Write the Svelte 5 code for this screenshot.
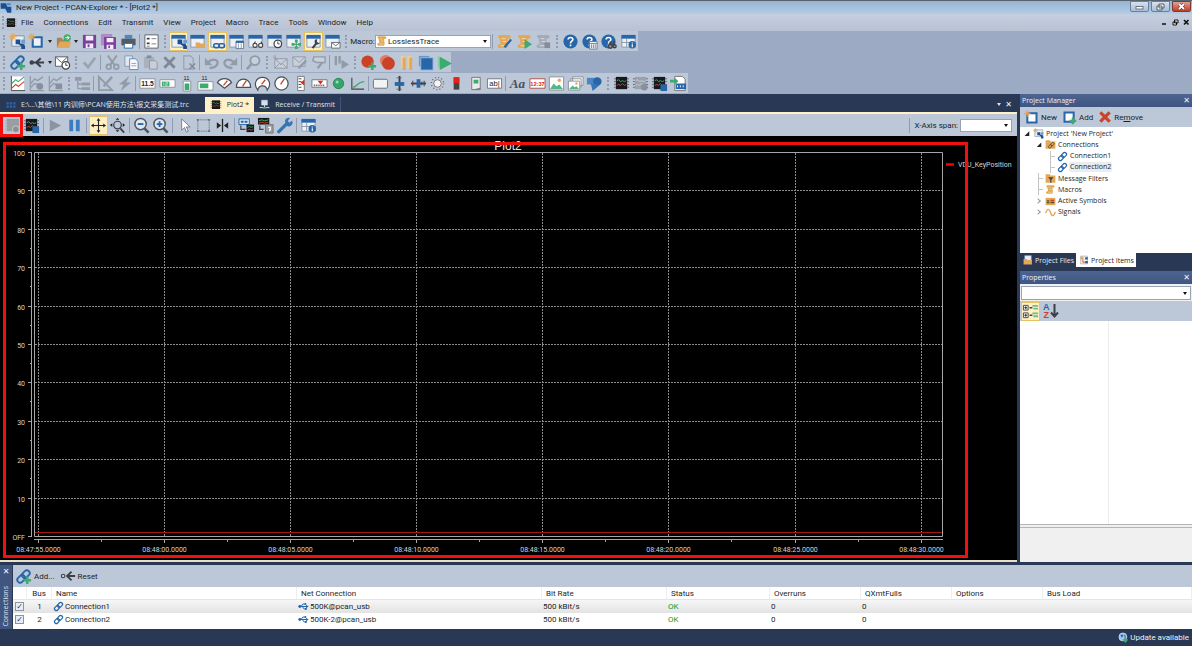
<script>
  const B = '#2766a8';
  const K = '#3c4147';
  const G = '#929ba8';
  const O = '#e3a857';
  const E = '#3dab70';
  const R = '#cb4327';

  const win = `<path d="M2 3h14v12H2z" fill="#eef1f5" stroke="#8b98aa"/><path d="M1.500 2h15v4h-15z" fill="${B}"/>`;
  const star = `<path d="M4 0v8M0 4h8M1.500 1.500l5 5M6.500 1.500l-5 5" stroke="${O}" stroke-width="1.200"/>`;
  const scroll = (c) => `<path d="M3 2h11l2 2-2 2h-2l1 7-1 3H3l-1.500-2L3 12h2L4 6 2 4z" fill="${c}"/><path d="M6 6h4M7 9h4M5 13.500h6" stroke="#fff" stroke-opacity=".6"/>`;
  const link = (c) => `<g transform="rotate(-45 9 9)" fill="none" stroke="${c}" stroke-width="2"><rect x="1" y="6" width="9" height="6" rx="3"/><rect x="8" y="6" width="9" height="6" rx="3"/></g>`;
  const plus = `<path d="M13 9v8M9 13h8" stroke="${E}" stroke-width="2.600"/>`;
  const net = (x, y) => `<g transform="translate(${x} ${y})"><path d="M0 0h5v4h3l2 3v3H6V7L3 5H0z" fill="#1d4f8e"/><path d="M6 0h4v4H6z" fill="#6e9ccb"/></g>`;
  const scope = (c = '#16191c', a = '#3fae6d', b = '#d2453b') => `<path d="M3 2h12v13H3z" fill="${c}"/><path d="M1 4h2M1 7h2M1 10h2M1 13h2M15 4h2M15 7h2M15 10h2M15 13h2" stroke="#667"/><path d="M4 6l2-1 2 2 2-1 2 1 2-1" fill="none" stroke="${a}"/><path d="M4 11l2-1 2 1 2-2 2 2 2-1" fill="none" stroke="${b}"/>`;
  const dial = (p, n) => `<path d="${p}" fill="#fff" stroke="#4b5157" stroke-width="1.300"/><path d="${n}" stroke="${R}" stroke-width="1.400"/>`;
  const help = `<circle cx="9" cy="9" r="7.500" fill="${B}"/><path d="M6.500 7c0-3 5-3 5 0 0 1.800-2.500 1.700-2.500 4M9 12.300v1.700" fill="none" stroke="#fff" stroke-width="1.700"/>`;
  const lens = `<path d="M11 11l5.500 5.500" stroke="#4f565e" stroke-width="2.800"/><circle cx="8" cy="7.500" r="6" fill="#dfe7f1" stroke="#4f565e" stroke-width="1.600"/>`;
  const info = win + `<path d="M2 10h14M7 6v9" stroke="#8b98aa"/><circle cx="13" cy="12.500" r="4" fill="${B}"/><path d="M13 10v1M13 12v3" stroke="#fff" stroke-width="1.200"/>`;
  const disk = `<path d="M2 2h14v14H2z" fill="#7b3f9d"/><path d="M5 3h8v5H5zM5 11h8v5H5z" fill="#f3edf7"/><path d="M7 12h2v3H7z" fill="#7b3f9d"/>`;

  const icons = {
    app: `<path d="M1 2h8l2 5h6v9h-6L8 10H1z" fill="#1d4f8e"/><path d="M10 2h6v3h-5z" fill="#4d86c0"/>`,
    newproj: `<path d="M3 3h13v11H3z" fill="#e8eef6" stroke="#7c90a8"/>` + star + net(7, 7),
    newdoc: `<path d="M5 4.500h9.500v10H5z" fill="#eef3f8" stroke="${B}" stroke-width="2.200"/>` + star,
    open: `<path d="M2 5h5l1 2h7v8H2z" fill="#a7854e"/><path d="M5 9h12l-2 7H2z" fill="${O}"/><circle cx="13" cy="5" r="3.800" fill="${E}"/><path d="M11 5h4M13 3l2 2-2 2" fill="none" stroke="#fff"/>`,
    save: disk,
    saveall: `<path d="M1 1h12v12H1z" fill="#b08cc6"/><g transform="translate(2.500 2.500) scale(.9)">${disk}</g>`,
    print: `<path d="M5 2h8v4H5z" fill="#4d86c0"/><path d="M1.500 6h15v7h-15z" fill="#555b62"/><path d="M4.500 11h9v5h-9z" fill="#fff" stroke="${B}"/>`,
    list: `<path d="M2 2h14v14H2z" fill="#fff" stroke="#5d6268"/><path d="M4 5h3v2H4zM4 10h3v2H4z" fill="${K}"/><path d="M9 6h5M4 14h3M9 11.500h5" stroke="#777d83"/>`,
    wnet: win + net(8, 7),
    wfolder: win + `<path d="M7 10h4l1 1h5v5H7z" fill="${O}"/>`,
    wlink: win + `<g fill="none" stroke="${B}" stroke-width="1.600"><rect x="5" y="11.500" width="6" height="4" rx="2"/><rect x="10.500" y="11.500" width="6" height="4" rx="2"/></g>`,
    wtable: win + `<path d="M8.500 8.500h8v8h-8z" fill="#fff" stroke="#6b7b90"/><path d="M8.500 8.500h8v2h-8z" fill="${B}"/><path d="M11 11v5M14 11v5" stroke="#8a98ab"/>`,
    wglass: win + `<g fill="#eef1f5" stroke="${K}" stroke-width="1.100"><path d="M7 12l2-3M16 12l-1-3" /><circle cx="8.500" cy="13" r="2.200"/><circle cx="14.500" cy="13" r="2.200"/></g>`,
    wclock: win + `<circle cx="12.500" cy="11.500" r="4" fill="#fff" stroke="${K}" stroke-width="1.300"/><path d="M12.500 9v2.500h2" fill="none" stroke="${K}"/>`,
    wcross: win + `<path d="M12 8v8M8 12h8" stroke="${E}" stroke-width="1.200"/><path d="M10.500 7h3v3h-3zM10.500 14h3v3h-3zM7 10.500h3v3H7zM14 10.500h3v3h-3z" fill="${E}"/>`,
    wwrench: win + `<path d="M8 16l4-5" stroke="${K}" stroke-width="2.200"/><path d="M11 7a3 3 0 105 3l-2 .5-1.500-1.500.5-2.500z" fill="${K}"/>`,
    wmail: win + `<path d="M8 10h9v6H8z" fill="#fff" stroke="#666c73"/><path d="M8 10l4.500 3.500L17 10" fill="none" stroke="#666c73"/>`,
    macro: scroll(O),
    macroedit: scroll(O) + `<path d="M9 15l7-8" stroke="${B}" stroke-width="2.400"/>`,
    macrorun: scroll(O) + `<path d="M9 7l8 5-8 5z" fill="${E}"/>`,
    macrostop: scroll('#a4abb6') + `<path d="M10 10h6v6h-6z" fill="#858d99"/>`,
    help,
    helptable: help + `<path d="M9 9h8v8H9z" fill="#fff" stroke="#6b7b90"/><path d="M11 12v4M13 12v4M15 12v4M9 11h8" stroke="#6b7b90"/>`,
    helpglass: help + `<g fill="#999" stroke="${K}" stroke-width="1.400"><circle cx="11" cy="14" r="2"/><circle cx="15.500" cy="14" r="1.600"/></g><path d="M11 9v4M15 9v4" stroke="${K}" stroke-width="1.800"/>`,
    info,
    link: link(B),
    linkadd: link(B) + plus,
    reset: `<circle cx="4" cy="9" r="2.400" fill="${K}"/><path d="M6 9h11M8.500 9l5-4.500M8.500 9l5 4.500" fill="none" stroke="${K}" stroke-width="2.200"/>`,
    resetopen: `<circle cx="3.500" cy="9" r="2" fill="none" stroke="${K}" stroke-width="1.200"/><path d="M7 9h10M8 9l5-5M8 9l5 5" fill="none" stroke="${K}" stroke-width="2"/>`,
    mailclock: `<path d="M1.500 3h13v10h-13z" fill="#fff" stroke="#555b62"/><path d="M1.500 3L8 9l6.500-6" fill="none" stroke="#555b62"/><circle cx="12.500" cy="12" r="4" fill="#fff" stroke="${K}" stroke-width="1.300"/><path d="M12.500 9.500V12h2" fill="none" stroke="${K}"/>`,
    check: `<path d="M3 9l4.500 5L15 4" fill="none" stroke="#98a2b0" stroke-width="2.800"/>`,
    cut: `<path d="M4 1.500l7 10M13.500 1.500l-7 10" stroke="${G}" stroke-width="2"/><g fill="none" stroke="${G}" stroke-width="1.800"><circle cx="5" cy="13.500" r="2.500"/><circle cx="13" cy="13.500" r="2.500"/></g>`,
    copy: `<path d="M2 2h8v11H2z" fill="#e3e8ef" stroke="#7f9ab8"/><path d="M7 5h6l3 3v8.500H7z" fill="#f7f9fb" stroke="#6587ad"/><path d="M9 10h5M9 12.500h5" stroke="#8aa5c2"/>`,
    paste: `<path d="M2 3h11v12H2z" fill="#a9b1bd"/><path d="M5 1.500h5v3H5z" fill="#838c99"/><path d="M8 7h6l2 2v7H8z" fill="#c9cfd8" stroke="#8d96a3"/>`,
    del: `<path d="M3.500 3.500l11 11M14.500 3.500l-11 11" stroke="#7e8896" stroke-width="3"/>`,
    delpage: `<path d="M4 2h7l3 3v11H4z" fill="none" stroke="#97a1af" stroke-width="1.200"/><path d="M10 10l6 6M16 10l-6 6" stroke="#808a97" stroke-width="1.500"/>`,
    undo: `<path d="M7 15c10-1 11-9 4-9-3 0-4 1-6 3" fill="none" stroke="${G}" stroke-width="2.400"/><path d="M2 4v8h8z" fill="${G}"/>`,
    redo: `<path d="M11 15C1 14 0 6 7 6c3 0 4 1 6 3" fill="none" stroke="${G}" stroke-width="2.400"/><path d="M16 4v8H8z" fill="${G}"/>`,
    find: `<circle cx="10.500" cy="7" r="4.800" fill="#c8d0dc" stroke="${G}" stroke-width="2"/><path d="M7 10.500l-5 5.500" stroke="${G}" stroke-width="2.800"/>`,
    mailnew: `<path d="M3 5h13v10H3z" fill="#c8d0dc" stroke="${G}"/><path d="M3 15l5-5 1.500 1.500L11 10l5 5M3 5l6.500 6L16 5M1 3l5 3M3 1l1 5" fill="none" stroke="${G}"/>`,
    mailedit: `<path d="M2 3h13v10H2z" fill="#c8d0dc" stroke="${G}"/><path d="M2 3l6.500 6L15 3" fill="none" stroke="${G}"/><path d="M8 15l8-8" stroke="${G}" stroke-width="2.400"/>`,
    tagg: `<path d="M4 3h12v6H7L3 7z" fill="#c8d0dc" stroke="${G}" stroke-width="1.500"/><path d="M8 15l5-6" stroke="${G}" stroke-width="2.400"/>`,
    step: `<path d="M3 2v10M7 2v8" stroke="${G}" stroke-width="2.500"/><path d="M9 6l8 5-8 5z" fill="${G}"/>`,
    recadd: `<circle cx="8" cy="8" r="6.500" fill="${R}"/>` + plus,
    recs: `<circle cx="7" cy="7" r="6" fill="#df7a64"/><circle cx="10" cy="10" r="6.800" fill="${R}"/>`,
    pauses: `<path d="M3 2h4v13H3zM10 2h4v13h-4z" fill="#f0cb92"/><path d="M5 4h3v13H5zM12 4h3v13h-3z" fill="${O}"/>`,
    stops: `<path d="M2 2h11v11H2z" fill="#6b97c8"/><path d="M4 4h13v13H4z" fill="${B}" stroke="#9dbbdc"/>`,
    plays: `<path d="M2 2l11 6-11 7z" fill="#86cfa6"/><path d="M4 3l13 7-13 7z" fill="${E}"/>`,
    chart: `<path d="M2 1.500h14v15H2z" fill="#fff"/><path d="M2.500 1v15.500H17" fill="none" stroke="#444"/><path d="M3 9l4-4 3 2 6-5" fill="none" stroke="${E}" stroke-width="1.200"/><path d="M3 14l4-4 3 2 6-5" fill="none" stroke="${R}" stroke-width="1.200"/>`,
    chartg: `<path d="M2.500 1v15.500H17M3 9l4-5 3 2 6-4M3 13l4-4 3 1" fill="none" stroke="${G}" stroke-width="1.400"/><circle cx="12.500" cy="12" r="3.600" fill="#8790a0"/>`,
    chartg2: `<path d="M2.500 1v15.500H17M3 9l4-5 3 2 6-4M3 13l4-4 3 1" fill="none" stroke="${G}" stroke-width="1.400"/><path d="M9 9h7v6H9z" fill="#8790a0"/>`,
    treeg: `<path d="M1 2h7v4H1zM8 8h9v3H8zM8 13h9v3H8z" fill="${G}"/><path d="M4 6v8.500h4M4 9.500h4" fill="none" stroke="${G}" stroke-width="1.400"/>`,
    ruler: `<path d="M2 2v14h14z" fill="none" stroke="${G}" stroke-width="2"/><path d="M7 12L16 2" stroke="${G}" stroke-width="2.500"/>`,
    bolt: `<path d="M14 1L3 10h5l-3 7 11-9h-5z" fill="${G}"/>`,
    num: `<path d="M1 4h16v10H1z" fill="#fff" stroke="#8c939b"/><text x="9" y="11.500" font-size="7" font-weight="700" text-anchor="middle" fill="#222">11.5</text>`,
    num2: `<path d="M1 5h16v8H1z" fill="#fff" stroke="#8c939b"/><path d="M3 7h8v5H3z" fill="${E}"/><path d="M5 8v3M7 8h2v1.500H7V11h2" fill="none" stroke="#c6ecd6" stroke-width=".8"/>`,
    bar1: `<text x="9" y="5" font-size="6" text-anchor="middle" fill="#222">11</text><path d="M5.500 6.500h8V17h-8z" fill="#fff" stroke="#8c939b"/><path d="M7 9h5v7H7z" fill="${E}"/>`,
    bar2: `<text x="8" y="5" font-size="6" text-anchor="middle" fill="#222">11</text><path d="M1 7h16v9H1z" fill="#fff" stroke="#8c939b"/><path d="M3 9h9v5H3z" fill="${E}"/>`,
    g1: dial('M1.500 8C5 2.500 13 2.500 16.500 8L9 14z', 'M8 11l4-5'),
    g2: dial('M1.500 13C1.500 1.500 16.500 1.500 16.500 13z', 'M8 12l4-6'),
    g3: dial('M4 16C-1 10 2 2.500 9 2.500S19 10 14 16c-1-6-9-6-10 0z', 'M8 10l4-5'),
    g4: dial('M9 2a7 7 0 110 14A7 7 0 019 2z', 'M8 10l4-6'),
    g5: `<path d="M6 1.500h7v15H6z" fill="#fff" stroke="#777"/><path d="M7 4h3M7 7h3M7 10h3M7 13h3" stroke="#444"/><path d="M13 5v6L9 8z" fill="#e21"/>`,
    g6: `<path d="M1 5h16v8H1z" fill="#fff" stroke="#777"/><path d="M3 11h12" stroke="#444" stroke-dasharray="1 1" stroke-width="2"/><path d="M7 6h6l-3 4z" fill="#e21"/>`,
    led: `<circle cx="9" cy="9" r="5.500" fill="#35a56a" stroke="#2a8655"/><circle cx="7.500" cy="7.500" r="1.600" fill="#9bdcb9"/>`,
    xy: `<path d="M3 3v12h13" fill="none" stroke="#444" stroke-width="1.200"/><path d="M4 13c5 0 3-5 12-6" fill="none" stroke="${E}" stroke-width="1.400"/>`,
    btn: `<rect x="1.500" y="4.500" width="15" height="9.500" rx="1.500" fill="#f2f3f5" stroke="#686e75"/>`,
    sv: `<path d="M9 1v16" stroke="${K}" stroke-width="2"/><path d="M6 3h6M6 15h6" stroke="${K}" stroke-dasharray="1 1"/><path d="M4 7.500h10v4H4z" fill="${B}"/>`,
    sh: `<path d="M1 9h16" stroke="${K}" stroke-width="2"/><path d="M3 6v6M15 6v6M12.500 7v4" stroke="${K}"/><path d="M7 4.500h4v9H7z" fill="${B}"/>`,
    knob: `<circle cx="9" cy="9" r="4" fill="#f4f4f4" stroke="#777"/><circle cx="9" cy="9" r="6.500" fill="none" stroke="#666" stroke-width="1.400" stroke-dasharray="1 2.400"/>`,
    sw: `<path d="M6 2.500h6v13H6z" fill="#444"/><path d="M6 2.500h6v6H6z" fill="#e32219"/>`,
    rocker: `<path d="M5 2.500h9v13H5z" fill="#e9ebec" stroke="#777"/><path d="M7 5h5v4H7z" fill="${E}"/><path d="M5 15.500l9-2v2z" fill="#777"/>`,
    abl: `<path d="M1.500 4h15v10h-15z" fill="#fff" stroke="#777"/><text x="9" y="11.800" font-size="8" text-anchor="middle" fill="#222">ab|</text>`,
    aa: `<text x="9" y="14" font-size="14" font-family="Liberation Serif" font-style="italic" font-weight="700" text-anchor="middle" fill="#4b5157">Aa</text>`,
    clock: `<path d="M1 4h16v10H1z" fill="#fff" stroke="#aa5048"/><text x="9" y="11.500" font-size="6" font-weight="700" text-anchor="middle" fill="#d22">12:37</text>`,
    img: `<path d="M1.500 2h15v14h-15z" fill="#fff" stroke="#8c939b"/><path d="M2 15l4-6 3 3 3-2 4 5z" fill="#57b487"/><circle cx="12" cy="5.500" r="1.800" fill="${O}"/>`,
    imgs: `<path d="M6 2h11v9H6zM4 4h11v9H4z" fill="#fff" stroke="#8c939b"/><path d="M1.500 6.500h12V16h-12z" fill="#fff" stroke="#8c939b"/><path d="M2 15l4-4 2 2 2-1 3 3z" fill="#57b487"/><circle cx="10" cy="9" r="1.300" fill="${O}"/>`,
    shapes: `<path d="M1 3h9v7H1z" fill="#4d86c0"/><circle cx="12" cy="7" r="4.500" fill="${B}"/><path d="M5 9l9 2-7 6z" fill="#3674b5"/>`,
    scope: scope(),
    scopeg: scope('#9aa2ae', '#c9cfd8', '#c9cfd8') + `<circle cx="13" cy="13" r="3.500" fill="#8790a0"/>`,
    scopes: scope() + `<path d="M10 10h7v7h-7z" fill="${B}"/>`,
    csv: `<path d="M5 1.500h8l3 3v12H5z" fill="#fff" stroke="#777"/><path d="M6 9h11v6H6z" fill="${B}"/><path d="M8 11v2M11 11v2M14 11v2" stroke="#fff"/><path d="M0 5h5V3l4 3.500L5 10V8H0z" fill="${E}"/>`,
    rec: `<path d="M3 2h13v13H3z" fill="#999ea2"/><path d="M1 4h2M1 7h2M1 10h2M1 13h2" stroke="#aaa"/><circle cx="12.500" cy="13" r="3.600" fill="#8a8f93" stroke="#c8cbce"/>`,
    play: `<path d="M3 3l12 6-12 6z" fill="#8d949e"/>`,
    pause: `<path d="M3.500 3h4v12h-4zM10.500 3h4v12h-4z" fill="#3b7cc0"/>`,
    move: `<path d="M9 3v12M3 9h12" stroke="#222" stroke-width="1.200"/><path d="M9 1l2 3H7zM9 17l-2-3h4zM1 9l3-2v4zM17 9l-3 2V7z" fill="#222"/>`,
    zoompan: `<circle cx="9" cy="8.500" r="4" fill="none" stroke="${K}" stroke-width="1.300"/><path d="M12 12l4 4.500" stroke="${K}" stroke-width="1.900"/><path d="M9 1l2 2H7zM9 16l-2-2h4zM1 8.500l2.500-2v4zM17 8.500l-2.500 2v-4z" fill="#222"/>`,
    zoomout: lens + `<path d="M5 7.500h6" stroke="${B}" stroke-width="2"/>`,
    zoomin: lens + `<path d="M5 7.500h6M8 4.500v6" stroke="${B}" stroke-width="2"/>`,
    cursor: `<path d="M6 2v12l3-3 2 5 2-1-2-4.500h4z" fill="#fff" stroke="#777c84"/>`,
    marquee: `<path d="M3 3h12v12H3z" fill="none" stroke="#555b62" stroke-dasharray="1 1"/><path d="M2 2h2v2H2zM14 2h2v2h-2zM2 14h2v2H2zM14 14h2v2h-2z" fill="#666c75"/>`,
    split: `<path d="M9 2v14" stroke="#222" stroke-width="1.400"/><path d="M3 5.500L7.500 9 3 12.500zM15 5.500L10.500 9l4.500 3.500z" fill="#222"/>`,
    tonet: `<path d="M1 2h11v6H1z" fill="#dfe9f5" stroke="${B}"/><path d="M3 5h7" stroke="${B}" stroke-width="2" stroke-dasharray="3 1"/><path d="M3 9v4h5" fill="none" stroke="#444" stroke-width="1.300"/><path d="M9 8h8v8H9z" fill="#16191c"/><path d="M10 11l2-1 2 1 2-1" stroke="${E}" fill="none"/><path d="M10 14l2-1 2 1 2-1" stroke="${R}" fill="none"/>`,
    topage: `<path d="M1 1h12v7H1z" fill="#16191c"/><path d="M2 4l3-1 3 1 4-1" stroke="${E}" fill="none"/><path d="M2 6.500l3-1 3 1 4-1" stroke="${R}" fill="none"/><path d="M3 9v4h4" fill="none" stroke="#444" stroke-width="1.300"/><path d="M9 8h8v9H9z" fill="#9ba1a9" stroke="#777"/><path d="M12 11h2v2l-1 2" fill="none" stroke="#fff" stroke-width="1.400"/>`,
    wrench: `<path d="M3 15.500l8-8" stroke="#3674b5" stroke-width="3.600" stroke-linecap="round"/><path d="M9.500 4.500A4 4 0 0115 1l-2.500 3 1.500 2 3-2a4 4 0 01-6 5z" fill="#3674b5"/>`,
    trc: `<path d="M1 4h4v4H1zM7 4h4v4H7zM13 4h4v4h-4zM1 10h4v4H1zM7 10h4v4H7zM13 10h4v4h-4z" fill="#2c66b0"/>`,
    rxtx: `<path d="M4 2h10v8H4z" fill="#eef3f8" stroke="#9fb0c4"/><path d="M5 3h8v5H5z" fill="#cfe0ee"/><path d="M1 14h16M9 10v4" stroke="#d5dde8" stroke-width="1.600"/><path d="M6 13h6v3H6z" fill="${E}"/>`,
    newbox: `<path d="M4 4h11v11H4z" fill="#fff" stroke="${B}" stroke-width="2.400"/>` + star,
    addbox: `<path d="M3 3h11v11H3z" fill="#fff" stroke="${B}" stroke-width="2.400"/>` + plus,
    remove: `<path d="M3 3l12 12M15 3L3 15" stroke="${R}" stroke-width="4"/>`,
    folderlink: `<path d="M1 2h7l1 2h8v12H1z" fill="${O}"/><g transform="translate(4 4) scale(.7)">${link('#5a4a2e')}</g>`,
    filter: `<path d="M1 2h7l1 2h8v12H1z" fill="${O}"/><path d="M5 7h9l-3.500 4v5h-2v-5z" fill="#444"/>`,
    symbols: `<path d="M1 3h16v12H1z" fill="${O}"/><path d="M3 8h4M3 11h4M9 11h6" stroke="#5a4a2e" stroke-width="2"/><path d="M9 6h6v3H9z" fill="${R}"/>`,
    signal: `<path d="M1 10C4 2 7 2 9 9s5 7 8-1" fill="none" stroke="${O}" stroke-width="2.200"/>`,
    files: `<path d="M3 1h12v12H3z" fill="#e8eef6" stroke="#6e93bc"/><path d="M1 7h6l1 2h8v8H1z" fill="${O}"/>`,
    items: `<path d="M3 2h12v14H3z" fill="#f5f1e6" stroke="#8b98aa"/><path d="M3 3h5v5H3z" fill="${O}"/><path d="M11 4h5v4h-5zM11 11h5v4h-5z" fill="${B}"/><path d="M7 8v5h4" fill="none" stroke="${R}" stroke-width="1.500"/>`,
    cat: `<g fill="#fff" stroke="#444"><path d="M1.500 2.500h5v5h-5zM1.500 10.500h5v5h-5z"/></g><path d="M2.500 5h3M4 3.500v3M2.500 13h3M4 11.500v3" stroke="#222"/><path d="M8 5h3M8 13h3" stroke="#444" stroke-width="1.500"/><path d="M11 2h6v2h-6zM12 5h5v2h-5zM11 10h6v2h-6zM12 13h5v2h-5z" fill="#6dbd8e"/>`,
    usb: `<path d="M1 9h14M5 9l3-4h3M7 9l3 4h3" fill="none" stroke="${B}" stroke-width="1.600"/><path d="M17.500 9L13 6v6z" fill="${B}"/><circle cx="3" cy="9" r="2.400" fill="${B}"/><circle cx="12" cy="5" r="1.700" fill="${B}"/><path d="M11.500 11.500h3v3h-3z" fill="${B}"/>`,
    globe: `<circle cx="8" cy="8" r="6.500" fill="#9dc4e8" stroke="#dbe9f6"/><path d="M4 5l3-1 2 2-3 3zM10 4l3 2-2 3z" fill="#2766a8"/><path d="M12 8v7M9 12l3 4 3.500-4" fill="none" stroke="${E}" stroke-width="2.600"/>`
  };

  // Items: icon name, '*name' for a pressed button, '|' separator, ':' grip, 'v' drop-down arrow.
  const bar1 = ': newproj newdoc v open v save saveall print | list : *wnet wfolder *wlink wtable wglass wclock wcross *wwrench wmail :'.split(' ');
  const bar1b = '| macroedit macrorun macrostop : help helptable helpglass info'.split(' ');
  const bar2 = ': linkadd reset v mailclock : check | cut copy paste del delpage | undo redo | find : mailnew mailedit tagg | step : recadd recs pauses stops plays'.split(' ');
  const bar3 = ': chart chartg chartg2 : treeg | ruler bolt | num num2 bar1 bar2 g1 g2 g3 g4 g5 g6 led xy | btn sv sh knob sw rocker abl | aa clock img imgs shapes : scope scopeg scopes csv'.split(' ');
  const docbar = 'rec scopes | play pause | *move zoompan | zoomout zoomin | cursor marquee split | tonet topage wrench | info'.split(' ');

  const menus = ['File', 'Connections', 'Edit', 'Transmit', 'View', 'Project', 'Macro', 'Trace', 'Tools', 'Window', 'Help'];

  const tree = [
    { level: 0, mark: 'open', icon: 'newproj', text: "Project 'New Project'" },
    { level: 1, mark: 'open', icon: 'folderlink', text: 'Connections' },
    { level: 2, icon: 'link', text: 'Connection1' },
    { level: 2, icon: 'link', text: 'Connection2', selected: true },
    { level: 1, mark: 'line', icon: 'filter', text: 'Message Filters' },
    { level: 1, mark: 'line', icon: 'macro', text: 'Macros' },
    { level: 1, mark: 'closed', icon: 'symbols', text: 'Active Symbols' },
    { level: 1, mark: 'closed', icon: 'signal', text: 'Signals' }
  ];

  const rows = [
    { bus: 1, name: 'Connection1', net: '500K@pcan_usb' },
    { bus: 2, name: 'Connection2', net: '500K-2@pcan_usb' }
  ];

  const times = ['08:47:55', '08:48:00', '08:48:05', '08:48:10', '08:48:15', '08:48:20', '08:48:25', '08:48:30'];
  const tx = (i) => Math.round(37.6 + i * 126.15) + 0.5;
  const ty = (i) => Math.round(152 + i * 38.4) + 0.5;
  const levels = ['100', '90', '80', '70', '60', '50', '40', '30', '20', '10', 'OFF'];
</script>

{#snippet icon(name, size = 18)}
  <svg class="icon" width={size} height={size} viewBox="0 0 18 18" aria-hidden="true">{@html icons[name]}</svg>
{/snippet}

{#snippet tools(items)}
  {#each items as item}
    {#if item === '|'}
      <i class="sep"></i>
    {:else if item === ':'}
      <i class="grip"></i>
    {:else if item === 'v'}
      <button class="drop" aria-label="More"></button>
    {:else if item[0] === '*'}
      <button class="tool on" aria-label={item.slice(1)} aria-pressed="true">{@render icon(item.slice(1), 17)}</button>
    {:else}
      <button class="tool" aria-label={item}>{@render icon(item, 17)}</button>
    {/if}
  {/each}
{/snippet}

<div class="window">
  <header class="title">
    {@render icon('app', 12)}
    <span>New Project - PCAN-Explorer * - [Plot2 *]</span>
    <div class="controls">
      <button aria-label="Minimize"><svg width="9" height="7" viewBox="0 0 9 7"><rect x="1" y="3.500" width="7" height="2.500" fill="#fff" stroke="#555d68" stroke-width=".8" /></svg></button>
      <button aria-label="Restore"><svg width="9" height="8" viewBox="0 0 9 8"><path d="M3 1h5v4H3zM1 3h5v4H1z" fill="#fff" stroke="#555d68" /></svg></button>
      <button class="close" aria-label="Close"><svg width="9" height="7" viewBox="0 0 9 7"><path d="M2 1l5 5M7 1L2 6" stroke="#5c2a25" stroke-width="3" /><path d="M2 1l5 5M7 1L2 6" stroke="#fff" stroke-width="1.800" /></svg></button>
    </div>
  </header>

  <nav class="menu">
    <i class="grip"></i>
    {@render icon('scope', 12)}
    <div class="entries">
      {#each menus as m}<button>{m}</button>{/each}
    </div>
    <div class="mdi">
      <button aria-label="Minimize document"><svg width="7" height="7"><path d="M1 5h4" stroke="#111" stroke-width="1.500" /></svg></button>
      <button aria-label="Restore document"><svg width="7" height="7"><path d="M2.500 1h3.500v3h-3.500zM1 3h3.500v3H1z" fill="#fff" stroke="#111" /></svg></button>
      <button aria-label="Close document"><svg width="7" height="7"><path d="M1 1l4.500 4.500M5.500 1L1 5.500" stroke="#111" stroke-width="1.700" /></svg></button>
    </div>
  </nav>

  <div class="bars">
    <div class="bar first">
      {@render tools(bar1)}
      <label for="macro">Macro:</label>
      <div class="combo macro">
        {@render icon('macro', 12)}
        <select id="macro"><option>LosslessTrace</option></select>
      </div>
      {@render tools(bar1b)}
    </div>
    <div class="bar second">{@render tools(bar2)}</div>
    <div class="bar third">{@render tools(bar3)}</div>
  </div>

  <main>
    <section class="document">
      <div class="tabs">
        <button class="tab path">{@render icon('trc', 10)}E:\...\其他\11 内训师\PCAN使用方法\报文采集测试.trc</button>
        <button class="tab active">{@render icon('scope', 12)}Plot2 *</button>
        <button class="tab last">{@render icon('rxtx', 11)}Receive / Transmit</button>
        <div class="tabend">
          <button class="drop light" aria-label="Documents"></button>
          <button class="x" aria-label="Close document tab">✕</button>
        </div>
      </div>
      <div class="docbar">
        {@render tools(docbar)}
        <div class="span">
          <i class="sep"></i>
          <label for="span">X-Axis span:</label>
          <div class="combo"><select id="span"><option></option></select></div>
        </div>
        <div class="mark small"></div>
      </div>
      <div class="plot">
        <svg viewBox="0 136 1017 424" role="img" aria-label="Plot2">
          <text class="ptitle" x="508" y="150" text-anchor="middle">Plot2</text>
          <g class="grid">
            {#each times as _, i}<path d="M{tx(i)} 153V536" />{/each}
            {#each levels.slice(1, 10) as _, i}<path d="M35 {ty(i + 1)}H943" />{/each}
          </g>
          <path d="M35 532.500H943" stroke="#a81414" />
          <path d="M34.500 152.500H942.500V536.500H34.500z" class="axis" />
          <path d="M31.500 152V537M34 539.500H943" class="axis" />
          {#each levels as l, i}
            <path class="axis" d="M28 {ty(i)}H32" />
            {#if i < 10}<path class="axis" d="M30 {ty(i) + 19}H32" />{/if}
            <text x="25" y={ty(i) + 3} text-anchor="end">{l}</text>
          {/each}
          {#each times as t, i}
            <path class="axis" d="M{tx(i)} 540V543" />
            {#if i < 7}<path class="axis" d="M{tx(i) + 63} 540V542" />{/if}
            <text x={tx(i)} y="552" text-anchor="middle">{t}.0000</text>
          {/each}
          <path d="M946 164.500H954" stroke="#f00" stroke-width="2.500" />
          <text x="958" y="167">VDU_KeyPosition</text>
        </svg>
        <div class="mark large"></div>
      </div>
    </section>

    <aside>
      <section class="panel project">
        <h2>Project Manager<button class="x" aria-label="Close Project Manager">✕</button></h2>
        <div class="actions">
          <button>{@render icon('newbox', 15)}New</button>
          <button>{@render icon('addbox', 15)}Add</button>
          <button>{@render icon('remove', 14)}<span>Re<u>m</u>ove</span></button>
        </div>
        <ul class="tree">
          {#each tree as n}
            <li class="l{n.level}">
              <i class="node {n.mark ?? 'none'}"></i>
              {@render icon(n.icon, 11)}
              <span class:selected={n.selected}>{n.text}</span>
            </li>
          {/each}
        </ul>
        <div class="ptabs">
          <button>{@render icon('files', 10)}Project Files</button>
          <button class="active">{@render icon('items', 10)}Project Items</button>
        </div>
      </section>
      <section class="panel props">
        <h2>Properties<button class="x" aria-label="Close Properties">✕</button></h2>
        <div class="combo wide"><select aria-label="Object"><option></option></select></div>
        <div class="propbar">
          <button class="tool on" aria-label="Categorized">{@render icon('cat', 17)}</button>
          <button class="az" aria-label="Alphabetical">
            <span class="letters"><b>A</b><b>Z</b></span>
            <svg width="9" height="16" viewBox="0 0 9 16" aria-hidden="true"><path d="M4.500 1v12M1 9.500l3.500 4 3.500-4" fill="none" stroke="#3c4147" stroke-width="2" /></svg>
          </button>
        </div>
        <div class="sheet"><div></div><div></div></div>
        <div class="desc"></div>
      </section>
    </aside>
  </main>

  <section class="connections">
    <div class="side">
      <button class="x" aria-label="Close Connections">✕</button>
      <h2>Connections</h2>
    </div>
    <div class="body">
      <div class="actions">
        <button>{@render icon('linkadd', 17)}Add...</button>
        <button>{@render icon('resetopen', 16)}Reset</button>
      </div>
      <table>
        <colgroup>
          <col class="c0" /><col class="c1" /><col class="c2" /><col class="c3" /><col class="c4" />
          <col class="c5" /><col class="c6" /><col class="c6" /><col class="c6" /><col />
        </colgroup>
        <thead>
          <tr><th></th><th class="bus">Bus</th><th>Name</th><th>Net Connection</th><th>Bit Rate</th><th>Status</th><th>Overruns</th><th>QXmtFulls</th><th>Options</th><th>Bus Load</th></tr>
        </thead>
        <tbody>
          {#each rows as r}
            <tr>
              <td><input type="checkbox" checked aria-label="Enable {r.name}" /></td>
              <td class="bus">{r.bus}</td>
              <td><span class="cell">{@render icon('link', 11)}{r.name}</span></td>
              <td><span class="cell">{@render icon('usb', 11)}{r.net}</span></td>
              <td>500 kBit/s</td>
              <td class="ok">OK</td>
              <td>0</td><td>0</td><td></td><td></td>
            </tr>
          {/each}
        </tbody>
      </table>
    </div>
  </section>

  <footer><button>{@render icon('globe', 11)}Update available</button></footer>
</div>

<style>
  :global(body) { background: #293955; }
  .window {
    display: flex;
    flex-direction: column;
    height: 100vh;
    min-height: 480px;
    overflow: hidden;
    color: #1b1f26;
    font: 8px/11px "Roboto", "Noto Sans CJK SC", sans-serif;
  }
  button {
    display: flex;
    align-items: center;
    justify-content: center;
    padding: 0;
    border: 0;
    background: none;
    color: inherit;
    font: inherit;
    white-space: nowrap;
  }
  h2 { margin: 0; font: inherit; }
  .icon { flex: none; font-family: "Liberation Sans", sans-serif; }

  .title {
    display: flex;
    align-items: center;
    flex: none;
    gap: 4px;
    height: 14px;
    box-sizing: border-box;
    border-top: 1px solid #59626f;
    background: linear-gradient(#98b3d1, #b3cde8);
  }
  .controls { display: flex; gap: 2px; margin: 0 1px 2px auto; }
  .controls button {
    width: 19px;
    height: 11px;
    box-sizing: border-box;
    border: 1px solid #6a7f9a;
    border-radius: 0 0 2px 2px;
    background: linear-gradient(#d6e2f0, #a8bdd6);
  }
  .controls .close { background: linear-gradient(#e0a196, #c23c23); border-color: #7c3a35; }

  .menu {
    display: flex;
    align-items: center;
    flex: none;
    height: 17px;
    background: linear-gradient(#c6cfde, #b7c2d4);
  }
  .menu .grip { margin: 0 1px 0 2px; }
  .entries { display: flex; gap: 10px; margin-left: 4px; padding-bottom: 1px; }
  .mdi { display: flex; gap: 4px; margin-left: auto; padding-right: 2px; }

  .bars { flex: none; padding-bottom: 1px; background: #9cabc3; }
  .bar {
    display: flex;
    align-items: center;
    justify-content: space-between;
    height: 20px;
    margin-bottom: 1px;
    background: #bcc7d8;
  }
  .first { width: 638px; }
  .second { width: 451px; }
  .third { width: 688px; }
  .bars .bar:last-child { margin-bottom: 0; }
  .tool { flex: none; width: 19px; height: 19px; box-sizing: border-box; border: 1px solid transparent; }
  .on { border-color: #e5c365; background: #fff0c3; }
  .sep { flex: none; width: 1px; height: 15px; margin: 0 2px 0 1px; background: #8e9bb2; }
  .grip { flex: none; width: 0; height: 13px; margin: 0 3px; border-left: 2px dotted #909cb1; }
  .drop { flex: none; width: 7px; height: 12px; }
  .drop::after { content: ""; border: 2px solid transparent; border-top: 3px solid #222; border-bottom: 0; }
  .drop.light::after { border-top-color: #dce3ee; }

  .combo {
    position: relative;
    display: flex;
    align-items: center;
    height: 13px;
    box-sizing: border-box;
    border: 1px solid #97a3b5;
    background: #fff;
  }
  .combo::after {
    content: "";
    position: absolute;
    right: 3px;
    border: 2px solid transparent;
    border-top: 3px solid #111;
    border-bottom: 0;
    pointer-events: none;
  }
  .combo select {
    flex: 1;
    min-width: 0;
    height: 11px;
    padding: 0;
    border: 0;
    appearance: none;
    background: none;
    color: inherit;
    font: inherit;
  }
  .macro { width: 116px; }
  .docbar .combo { width: 52px; }
  .wide { margin: 2px 1px 1px; height: 14px; }

  main { display: flex; flex: 1; min-height: 0; gap: 3px; background: #293955; }
  .document { display: flex; flex: 1; flex-direction: column; min-width: 0; padding-top: 3px; }
  .tabs { display: flex; flex: none; height: 15px; border-bottom: 2px solid #fff0c8; color: #dfe5ef; }
  .tab { gap: 5px; padding: 0 5px; font: 7px/11px "Open Sans", "Noto Sans CJK SC", sans-serif; }
  .path { padding: 0 16px 0 6px; }
  .last { border-right: 1px solid #41557c; }
  .active { background: #fff0c8; color: #1b1f26; }
  .tabend { display: flex; align-items: center; gap: 2px; margin-left: auto; padding-right: 4px; }
  .x { width: 9px; height: 10px; color: #f2f5fa; font: 8px/10px "DejaVu Sans", sans-serif; }
  .docbar {
    position: relative;
    display: flex;
    align-items: center;
    flex: none;
    height: 22px;
    padding-left: 3px;
    background: #bcc7d8;
  }
  .docbar .sep { margin: 0 2px; }
  .span { display: flex; align-items: center; gap: 2px; margin-left: auto; padding-right: 5px; }
  .mark { position: absolute; border: 3px solid #f01010; box-sizing: border-box; }
  .small { left: 0; top: 0; width: 23px; height: 23px; z-index: 1; }
  .large { inset: 6px 49px 2px 3px; }
  .plot {
    position: relative;
    flex: 1;
    min-height: 0;
    background: #000;
    border-bottom: 2px solid #e8dfc6;
  }
  .plot svg { display: block; width: 100%; height: 100%; }
  .plot text { fill: #d6d6d6; font: 7px "Roboto", sans-serif; }
  .plot .ptitle { font: 12px "Liberation Sans", sans-serif; fill: #e6e6e6; }
  .grid path { fill: none; stroke: #8c8c8c; stroke-dasharray: 2 1; }
  .axis { fill: none; stroke: #a6a6a6; }

  aside { display: flex; flex: none; flex-direction: column; gap: 4px; width: 172px; }
  .panel { display: flex; flex-direction: column; }
  .panel h2 {
    display: flex;
    align-items: center;
    justify-content: space-between;
    flex: none;
    height: 13px;
    padding: 0 1px 0 2px;
    background: linear-gradient(#4d6490, #3f5583);
    color: #eef2f8;
    font: 7px/11px "Open Sans", sans-serif;
  }
  .actions { display: flex; align-items: center; flex: none; gap: 5px; background: #bcc7d8; }
  .project .actions { height: 20px; padding-left: 4px; }
  .actions button { gap: 2px; }
  .tree {
    display: grid;
    grid-auto-rows: 1fr;
    height: 90px;
    margin: 0;
    padding: 1px 0 35px 4px;
    background: #fff;
    list-style: none;
    font: 7px/10px "Open Sans", sans-serif;
  }
  .tree li { display: flex; align-items: center; gap: 1px; }
  .l1 { padding-left: 12px; }
  .l2 { padding-left: 24px; }
  .tree span { padding: 0 1px; }
  .tree .selected { background: #ececee; border-radius: 2px; }
  .node { flex: none; width: 7px; height: 5px; margin-right: 1px; }
  .node.open { clip-path: polygon(75% 0, 75% 100%, 5% 100%); background: #222; }
  .node.closed::before { content: ""; display: block; width: 3px; height: 3px; border: 1px solid #999; border-width: 1px 1px 0 0; transform: rotate(45deg); }
  .node.line, .l2 .node {
    height: 11px;
    width: 5px;
    margin-left: 2px;
    border-left: 1px solid #c4c4c4;
    background: linear-gradient(#c4c4c4, #c4c4c4) center / 100% 1px no-repeat;
    box-sizing: border-box;
  }
  .ptabs { display: flex; height: 14px; color: #e6ebf3; font: 7px/11px "Open Sans", sans-serif; }
  .ptabs button { gap: 2px; padding: 0 2px 0 3px; }
  .ptabs .active { background: #fff; color: #1b1f26; }
  .props { flex: 1; min-height: 0; background: #f0f0f0; }
  .propbar { display: flex; align-items: center; flex: none; gap: 3px; height: 20px; padding-left: 1px; background: #bcc7d8; }
  .letters { display: grid; font: 9px/8px "Liberation Sans", sans-serif; }
  .letters b { color: #2766a8; }
  .letters b + b { color: #cb4327; }
  .sheet { display: grid; grid-template-columns: 88px 1fr; flex: 1; background: #fff; border-bottom: 1px solid #b5b5b5; }
  .sheet div + div { border-left: 1px solid #ececec; }
  .desc { height: 34px; margin-top: 2px; border-top: 1px solid #b5b5b5; }

  .connections { display: flex; flex: none; height: 64px; margin-top: 3px; }
  .side { display: flex; flex-direction: column; align-items: center; justify-content: space-between; width: 12px; padding: 2px 0; box-sizing: border-box; background: #40557f; color: #dfe5ef; }
  .side h2 { writing-mode: vertical-rl; transform: rotate(180deg); font: 7px/12px "Open Sans", sans-serif; }
  .body { flex: 1; min-width: 0; margin-left: 1px; background: #fff; }
  .connections .actions { height: 22px; padding-left: 2px; }
  table { width: 100%; table-layout: fixed; border-collapse: separate; border-spacing: 0; }
  .c0 { width: 14px; }
  .c1 { width: 25px; }
  .c2 { width: 245px; }
  .c3 { width: 245px; }
  .c4 { width: 125px; }
  .c5 { width: 103px; }
  .c6 { width: 91px; }
  th { height: 13px; padding: 0 0 0 4px; border-right: 1px solid #eceef0; border-bottom: 1px solid #e4e4e4; box-sizing: border-box; font-weight: 400; text-align: left; line-height: 11px; }
  td { height: 13px; padding: 0 0 0 1px; white-space: nowrap; line-height: 11px; }
  .bus { padding: 0; text-align: center; }
  .cell { display: flex; align-items: center; gap: 1px; }
  tbody tr:first-child { background: linear-gradient(#f6f6f6, #e3e3e3); }
  .ok { color: #0a9a2a; }
  input[type="checkbox"] {
    display: grid;
    place-items: center;
    width: 9px;
    height: 9px;
    margin: 0 0 0 1px;
    box-sizing: border-box;
    appearance: none;
    border: 1px solid #8e949c;
    background: #e9edf3;
  }
  input[type="checkbox"]:checked::after { content: "✓"; color: #26386e; font: 700 8px/7px "DejaVu Sans", sans-serif; }

  footer { display: flex; align-items: center; justify-content: flex-end; flex: none; height: 17px; padding-right: 3px; background: #293955; color: #eef2f8; }
  footer button { gap: 1px; }
</style>
